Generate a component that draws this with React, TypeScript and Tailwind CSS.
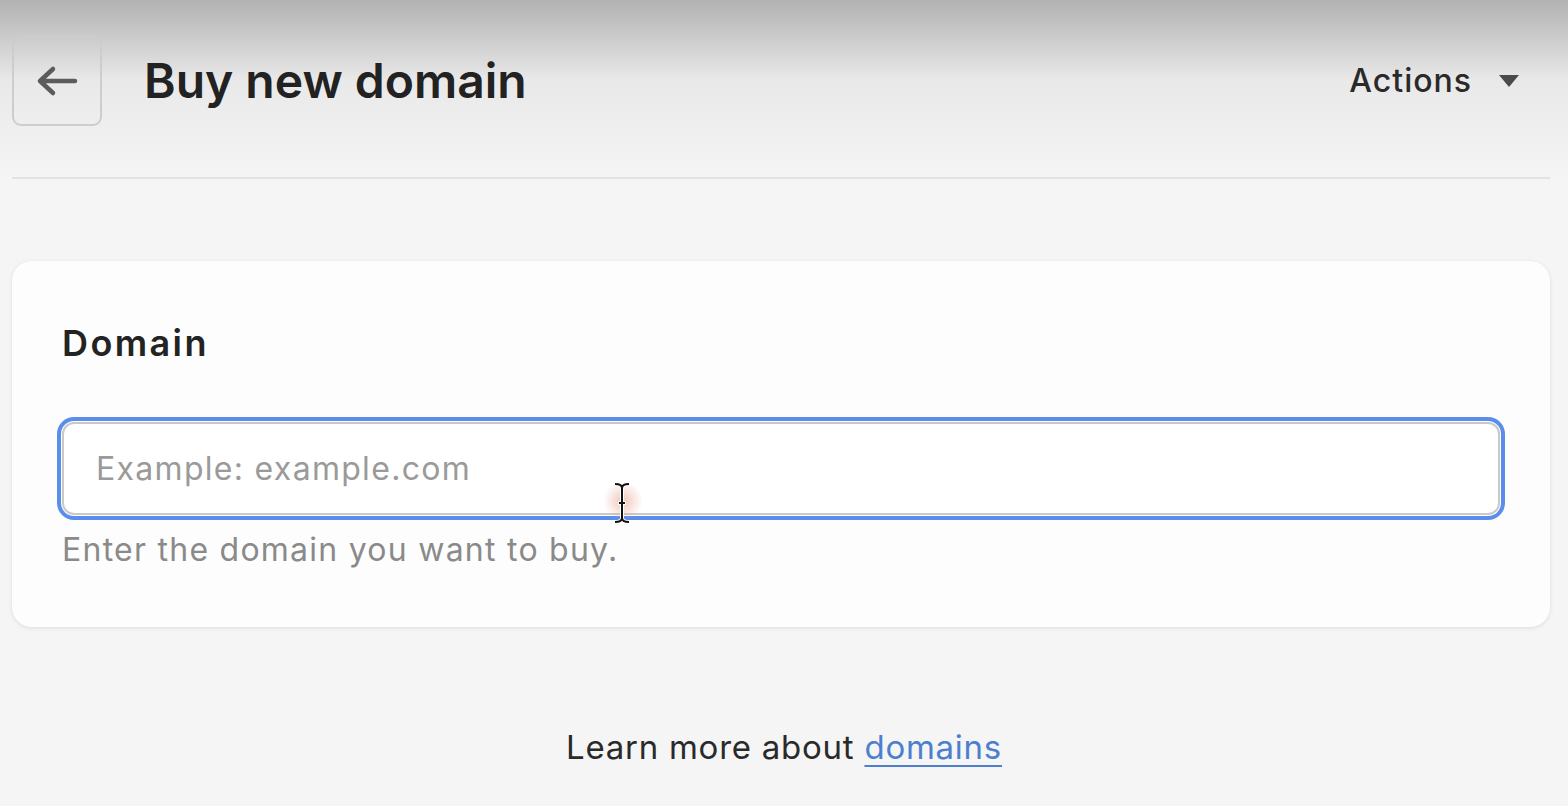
import React from "react";

export default function App() {
  return (
    <div
      className="relative w-[1568px] h-[806px] overflow-hidden bg-[#f5f5f5] text-[#1f1f1f]"
      style={{ fontFamily: "Inter, 'Liberation Sans', sans-serif" }}
    >
      {/* header */}
      <div className="bg-gradient-to-b from-[#b2b2b2] via-[#e9e9e9] via-45% to-[#f5f5f5] px-[12px] pt-[36px]">
        <div className="flex items-center h-[90px]">
          <button className="w-[90px] h-[90px] rounded-[9px] border-2 border-[#cdcdcd] flex items-center justify-center">
            <svg width="44" height="32" viewBox="0 0 44 32" fill="none">
              <path
                d="M40 16H6M18 4L5 16l13 12"
                stroke="#5c5c5c"
                strokeWidth="4.5"
                strokeLinecap="round"
                strokeLinejoin="round"
              />
            </svg>
          </button>
          <h1 className="ml-[42px] text-[48px] font-semibold tracking-[0px] text-[#222] leading-none">
            Buy new domain
          </h1>
          <div className="ml-auto mr-[36px] flex items-center gap-[26px]">
            <span className="text-[32px] font-medium tracking-[1px] text-[#2a2a2a]">Actions</span>
            <svg width="22" height="14" viewBox="0 0 22 14">
              <path d="M1 1h20L11 13z" fill="#4a4a4a" />
            </svg>
          </div>
        </div>
        <div className="mt-[51px] h-[2px] mr-[6px] bg-[#e2e2e2]" />
      </div>

      {/* card */}
      <div className="mx-[12px] mr-[18px] mt-[82px] rounded-[20px] bg-[#fdfdfd] shadow-[0_1px_4px_rgba(0,0,0,0.10)] px-[50px] pt-[58px] pb-[57px]">
        <div className="text-[36px] font-semibold tracking-[2.4px] text-[#232323] leading-[48px]">Domain</div>
        <div className="relative mt-[55px] h-[93px] rounded-[12px] border-2 border-[#c9c9c9] bg-white shadow-[0_0_0_1px_#ffffff,0_0_0_5px_#5b8eec] flex items-center pl-[32px]">
          <span className="text-[32px] tracking-[1.3px] text-[#9a9a9a]">Example: example.com</span>
          {/* cursor */}
          <div className="absolute left-[539px] top-[57px] w-[40px] h-[40px] rounded-full bg-[radial-gradient(circle,rgba(230,150,130,0.55),rgba(230,150,130,0)_70%)]" />
          <svg className="absolute left-[548px] top-[58px]" width="20" height="42" viewBox="0 0 20 42">
            <path
              d="M3 2c4 0 7 1 7 4v30c0 3-3 4-7 4M17 2c-4 0-7 1-7 4v30c0 3 3 4 7 4M6 21h8"
              stroke="#fff"
              strokeWidth="4"
              fill="none"
            />
            <path
              d="M3 2c4 0 7 1 7 4v30c0 3-3 4-7 4M17 2c-4 0-7 1-7 4v30c0 3 3 4 7 4M7 21h6"
              stroke="#111"
              strokeWidth="2"
              fill="none"
            />
          </svg>
        </div>
        <div className="mt-[15px] text-[32px] leading-[40px] tracking-[1.25px] text-[#8a8a8a]">
          Enter the domain you want to buy.
        </div>
      </div>

      {/* footer */}
      <div className="mt-[98px] text-center text-[33px] leading-[44px] tracking-[0.75px] text-[#2a2a2a]">
        Learn more about{" "}
        <a className="text-[#4d7fce] underline underline-offset-[6px] decoration-2">domains</a>
      </div>
    </div>
  );
}
